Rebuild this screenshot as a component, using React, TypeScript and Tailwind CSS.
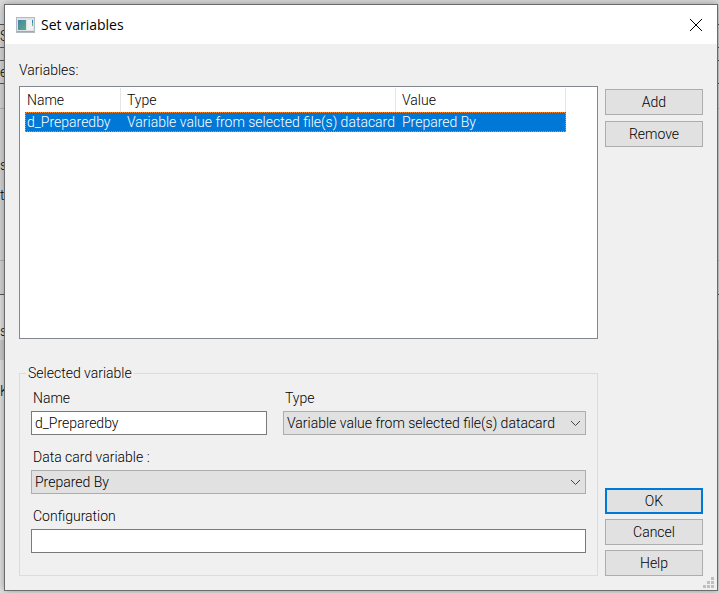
import { useState, type ReactNode } from 'react';

type Variable = {
  name: string;
  type: string;
  value: string;
};

const DATACARD_TYPE = 'Variable value from selected file(s) datacard';

const variables: Variable[] = [{ name: 'd_Preparedby', type: DATACARD_TYPE, value: 'Prepared By' }];

function AppIcon() {
  return (
    <svg width="19" height="16" viewBox="0 0 19 16" aria-hidden="true">
      <defs>
        <linearGradient id="pane" x1="0" y1="0" x2="1" y2="1">
          <stop offset="0" stopColor="#4a7fb0" />
          <stop offset="1" stopColor="#56b07a" />
        </linearGradient>
      </defs>
      <rect x="0.5" y="0.5" width="18" height="15" fill="#dfe3e8" stroke="#b4bac3" />
      <rect x="2" y="3" width="8" height="10" fill="url(#pane)" />
      <rect x="11" y="3" width="6" height="10" fill="#f0f1f3" />
      <rect x="16" y="3" width="1" height="3" fill="#3d7fb5" />
      <rect x="16" y="6" width="1" height="3" fill="#5cb87a" />
      <rect x="1" y="14" width="17" height="1" fill="#a3a9b3" />
    </svg>
  );
}

function CloseIcon() {
  return (
    <svg width="14" height="14" viewBox="0 0 14 14" fill="none" stroke="#000" aria-hidden="true">
      <path d="M1 1l12 12M13 1L1 13" />
    </svg>
  );
}

function PushButton({ children, isDefault = false }: { children: ReactNode; isDefault?: boolean }) {
  return (
    <button
      type="button"
      className={`h-[26px] w-full bg-[#e1e1e1] text-center ${
        isDefault ? 'border-2 border-[#0078d7]' : 'border border-[#adadad]'
      }`}
    >
      {children}
    </button>
  );
}

interface FieldProps {
  id: string;
  label: string;
  className?: string;
  children: ReactNode;
}

function Field({ id, label, className = '', children }: FieldProps) {
  return (
    <div className={`flex min-w-0 flex-col gap-[3px] ${className}`}>
      <label htmlFor={id} className="px-[2px] leading-5">
        {label}
      </label>
      {children}
    </div>
  );
}

function TextBox({ id, defaultValue }: { id: string; defaultValue?: string }) {
  return (
    <input
      id={id}
      type="text"
      defaultValue={defaultValue}
      className="h-6 w-full border border-[#7a7a7a] bg-white px-[3px] outline-none"
    />
  );
}

function DropDown({ id, options }: { id: string; options: string[] }) {
  return (
    <div className="relative">
      <select
        id={id}
        className="block h-6 w-full appearance-none border border-[#adadad] bg-[#e1e1e1] pr-5 pl-[3px] outline-none"
      >
        {options.map((option) => (
          <option key={option}>{option}</option>
        ))}
      </select>
      <svg
        className="pointer-events-none absolute top-[9px] right-[5px]"
        width="11"
        height="7"
        viewBox="0 0 11 7"
        fill="none"
        stroke="#444"
        aria-hidden="true"
      >
        <path d="M1 1l4.5 4.5L10 1" />
      </svg>
    </div>
  );
}

// The window underneath only peeks out along the dialog's edges.
function ParentWindow() {
  return (
    <div aria-hidden="true" className="absolute inset-0 overflow-hidden bg-[#d6d6d6] leading-[22px]">
      <div className="h-6 bg-[#dcdcdc]" />
      <div className="h-6 border-y border-[#555]">S</div>
      <div className="h-3" />
      <div className="h-6 border-y border-[#555]">ep</div>
      <div className="h-6" />
      <div className="h-[46px] border-t border-[#b4b4b4]" />
      <div className="h-[30px]">s</div>
      <div className="h-[76px]">t</div>
      <div className="h-[34px] border-t border-[#b4b4b4]" />
      <div className="h-[26px] border-t border-[#555] bg-[#e2e2e2]" />
      <div className="h-5 bg-[#e2e2e2]">s</div>
      <div className="h-5 bg-[#cccccc]" />
      <div className="h-5 bg-[#e2e2e2]" />
      <div className="h-full bg-[#e2e2e2]">K</div>
    </div>
  );
}

function VariableList() {
  const [selected, setSelected] = useState(0);

  return (
    <div className="min-h-[160px] flex-1 overflow-hidden border border-[#828790] bg-white pt-px pl-[5px]">
      <table className="w-[541px] table-fixed border-separate border-spacing-0 text-left">
        <colgroup>
          <col className="w-[96px]" />
          <col className="w-[275px]" />
          <col className="w-[170px]" />
        </colgroup>
        <thead>
          <tr className="h-6">
            <th className="border-r border-[#e5e5e5] p-0 pl-[2px] font-light">Name</th>
            <th className="border-r border-[#e5e5e5] p-0 pl-[6px] font-light">Type</th>
            <th className="border-r border-[#e5e5e5] p-0 pl-[6px] font-light">Value</th>
          </tr>
        </thead>
        <tbody>
          {variables.map((variable, index) => {
            const isSelected = selected === index;
            // The checkered row shows through the cells' clear borders as a focus rectangle.
            const cell = isSelected ? 'border-transparent bg-[#0078d7] bg-clip-padding' : 'border-transparent';
            return (
              <tr
                key={variable.name}
                onClick={() => setSelected(index)}
                className={`h-5 leading-[18px] whitespace-nowrap ${
                  isSelected
                    ? 'bg-[repeating-conic-gradient(#ff8728_0_25%,#0078d7_0_50%)] bg-size-[2px_2px] text-white'
                    : ''
                }`}
              >
                <td className={`border-y border-l p-0 pl-px ${cell}`}>{variable.name}</td>
                <td className={`border-y p-0 pl-[6px] ${cell}`}>{variable.type}</td>
                <td className={`border-y border-r p-0 pl-[6px] ${cell}`}>{variable.value}</td>
              </tr>
            );
          })}
        </tbody>
      </table>
    </div>
  );
}

function ResizeGrip() {
  return (
    <svg className="absolute right-[3px] bottom-[2px]" width="11" height="11" viewBox="0 0 11 11" fill="#bfbfbf" aria-hidden="true">
      <path d="M8 0h3v3H8zM4 4h3v3H4zM8 4h3v3H8zM0 8h3v3H0zM4 8h3v3H4zM8 8h3v3H8z" />
    </svg>
  );
}

export default function App() {
  return (
    <div className="relative flex min-h-screen pt-1 pr-px pb-[2px] pl-1 font-[Roboto,sans-serif] text-[14px] font-light text-black">
      <ParentWindow />

      <div
        role="dialog"
        aria-labelledby="dialog-title"
        className="relative flex min-w-0 flex-1 flex-col border border-[#6b6b6b] bg-[#f0f0f0] shadow-[0_0_8px_rgba(0,0,0,0.35)]"
      >
        <header className="flex h-[39px] items-center gap-[6px] bg-white pr-[14px] pl-[11px]">
          <AppIcon />
          <h1 id="dialog-title" className="flex-1 font-['Open_Sans',sans-serif] text-[14px] font-normal">
            Set variables
          </h1>
          <button type="button" aria-label="Close">
            <CloseIcon />
          </button>
        </header>

        <main className="flex flex-1 gap-[7px] px-[14px] pt-4 pb-[14px]">
          <div className="flex min-w-0 flex-1 flex-col">
            <h2 className="mb-[6px] leading-5 font-light">Variables:</h2>
            <VariableList />

            <fieldset className="mt-6 min-w-0 border border-[#dcdcdc] px-[6px] pb-[22px]">
              <legend className="px-[2px] leading-5">Selected variable</legend>
              <div className="grid grid-cols-[236fr_303fr] gap-x-4 gap-y-3 px-[5px] pt-[5px]">
                <Field id="variable-name" label="Name">
                  <TextBox id="variable-name" defaultValue="d_Preparedby" />
                </Field>
                <Field id="variable-type" label="Type">
                  <DropDown id="variable-type" options={[DATACARD_TYPE]} />
                </Field>
                <Field id="datacard-variable" label="Data card variable :" className="col-span-2">
                  <DropDown id="datacard-variable" options={['Prepared By']} />
                </Field>
                <Field id="configuration" label="Configuration" className="col-span-2">
                  <TextBox id="configuration" />
                </Field>
              </div>
            </fieldset>
          </div>

          <div className="flex w-[98px] shrink-0 flex-col pt-[29px]">
            <div className="flex flex-col gap-[6px]">
              <PushButton>Add</PushButton>
              <PushButton>Remove</PushButton>
            </div>
            <div className="mt-auto flex flex-col gap-[5px]">
              <PushButton isDefault>OK</PushButton>
              <PushButton>Cancel</PushButton>
              <PushButton>Help</PushButton>
            </div>
          </div>
        </main>

        <ResizeGrip />
      </div>
    </div>
  );
}
